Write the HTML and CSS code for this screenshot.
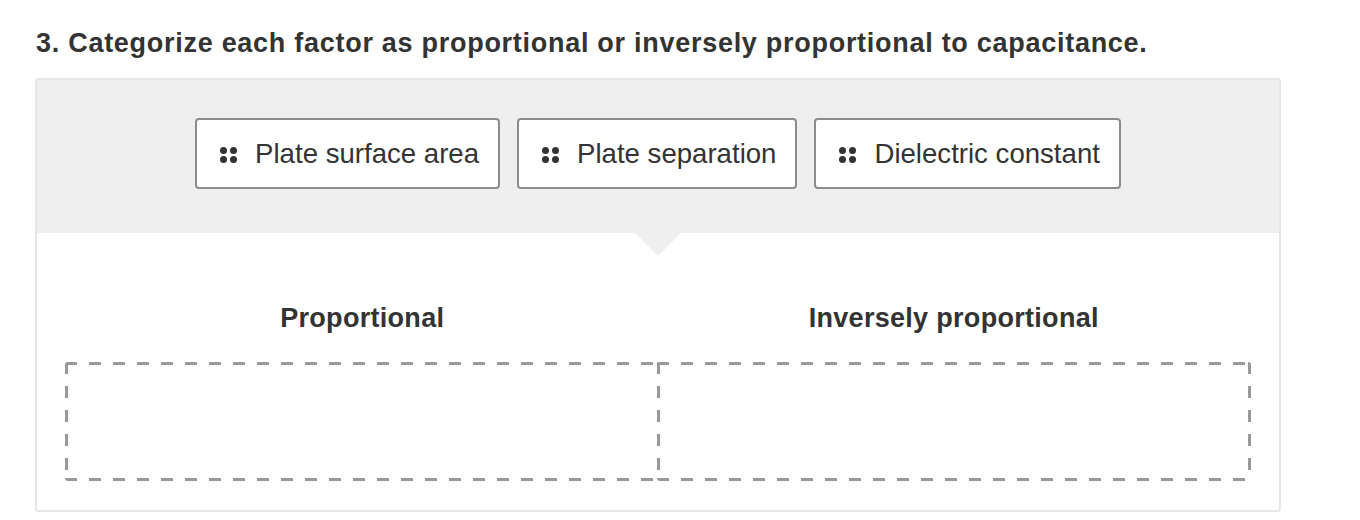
FILE: index.html
```html
<!DOCTYPE html>
<html>
<head>
<meta charset="utf-8">
<link rel="stylesheet" href="styles.css">
</head>
<body>
<div class="page">
  <h1 class="question">3. Categorize each factor as proportional or inversely proportional to capacitance.</h1>
  <div class="activity">
    <div class="bank">
      <div class="chip"><span class="grip"><i></i><i></i><i></i><i></i></span><span>Plate surface area</span></div>
      <div class="chip"><span class="grip"><i></i><i></i><i></i><i></i></span><span>Plate separation</span></div>
      <div class="chip"><span class="grip"><i></i><i></i><i></i><i></i></span><span>Dielectric constant</span></div>
    </div>
    <div class="pointer"></div>
    <div class="categories">
      <div class="category">
        <div class="cat-title">Proportional</div>
        <div class="zone"></div>
      </div>
      <div class="category right">
        <div class="cat-title">Inversely proportional</div>
        <div class="zone"></div>
      </div>
    </div>
  </div>
</div>
</body>
</html>
```
FILE: styles.css
```css
* { box-sizing: border-box; }
html, body { margin: 0; padding: 0; background: #fff; }
body { font-family: "Liberation Sans", Arial, Helvetica, sans-serif; color: #333; }
.page { padding: 28px 0 0 35px; width: 1281px; }
.question {
  margin: 0 0 20px 1px;
  font-size: 27px;
  line-height: 30px;
  letter-spacing: 0.72px;
  font-weight: bold;
  color: #333;
  white-space: nowrap;
}
.activity {
  border: 2px solid #e6e6e6;
  border-radius: 3px;
  width: 1246px;
  height: 434px;
  display: flex;
  flex-direction: column;
}
.bank {
  background: #efefef;
  height: 153px;
  padding-top: 38px;
  display: flex;
  justify-content: center;
  align-items: flex-start;
  gap: 17px;
}
.chip {
  height: 71px;
  border: 2px solid #8c8c8c;
  border-radius: 4px;
  background: #fff;
  display: flex;
  align-items: center;
  padding: 0 19px 0 23px;
  gap: 18px;
  font-size: 27.6px;
  color: #333;
}
.grip {
  display: grid;
  grid-template-columns: 7px 7px;
  grid-template-rows: 7px 7px;
  gap: 2px 3px;
  margin-top: 2px;
}
.grip i {
  display: block;
  width: 7px;
  height: 7px;
  border-radius: 50%;
  background: #333;
}
.pointer {
  align-self: center;
  width: 0;
  height: 0;
  border-left: 23px solid transparent;
  border-right: 23px solid transparent;
  border-top: 23px solid #efefef;
  margin-bottom: -23px;
}
.categories {
  display: flex;
  padding: 69px 28px 0 28px;
}
.category { flex: 1; display: flex; flex-direction: column; align-items: stretch; }
.category.right { margin-left: -3px; }
.cat-title {
  text-align: center;
  font-size: 27px;
  line-height: 32px;
  letter-spacing: 0.3px;
  font-weight: bold;
  color: #333;
  margin-bottom: 28px;
}
.zone {
  height: 119px;
  border-radius: 3px;
  background:
    repeating-linear-gradient(90deg, #999 0 12px, transparent 12px 24px) left top / 100% 3px no-repeat,
    repeating-linear-gradient(90deg, #999 0 12px, transparent 12px 24px) left bottom / 100% 3px no-repeat,
    repeating-linear-gradient(180deg, #999 0 12px, transparent 12px 24px) left top / 3px 100% no-repeat,
    repeating-linear-gradient(180deg, #999 0 12px, transparent 12px 24px) right top / 3px 100% no-repeat;
}
```
